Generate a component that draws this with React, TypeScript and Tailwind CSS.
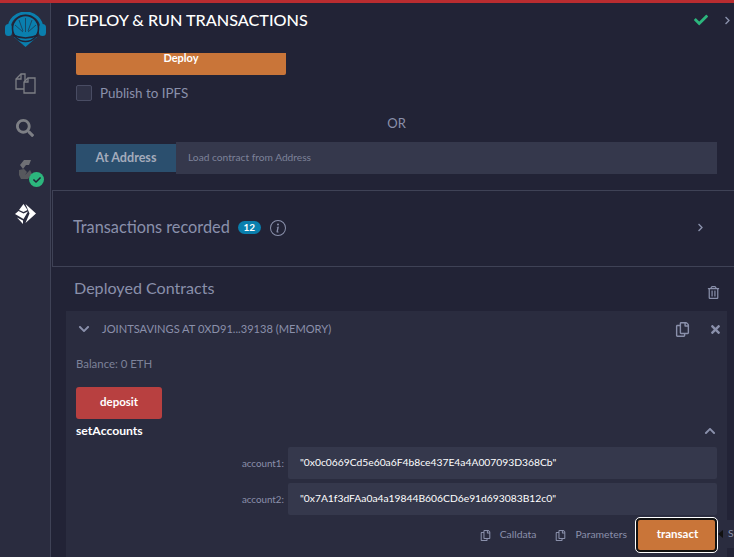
import { FaCheck, FaChevronDown, FaChevronRight, FaChevronUp, FaRegCopy, FaRegTrashAlt, FaSearch, FaTimes } from "react-icons/fa";
import { BsInfoCircle } from "react-icons/bs";

const font = { fontFamily: "Lato, 'Open Sans', sans-serif" };

function RemixLogo() {
  return (
    <svg width="41" height="35" viewBox="0 0 41 35">
      <rect x="0" y="12" width="7" height="12" rx="3.5" fill="#0a7fae" />
      <rect x="34" y="12" width="7" height="12" rx="3.5" fill="#0a7fae" />
      <path d="M4 17a16.5 16 0 0 1 33 0" fill="none" stroke="#0a7fae" strokeWidth="3" />
      <path d="M9 25h23l-11.5 10Z" fill="#0a7fae" />
      <circle cx="20.5" cy="16.5" r="13" fill="#0a7fae" stroke="#222336" strokeWidth="1.6" />
      <path d="M8 23q12.500 6 25 0" fill="none" stroke="#222336" strokeWidth="1.6" />
      <path d="M20.500 6v14M14 8l4 11M27 8l-4 11M10 13l8 7M31 13l-8 7" stroke="#222336" strokeWidth="0.6" />
    </svg>
  );
}

function EthLogo() {
  return (
    <svg width="21" height="20" viewBox="0 0 21 20">
      <path d="M8.500 0 12.500 6 8.500 8 4 6Z" fill="#fff" />
      <path d="M10.500 0 21 9.500 10.500 19 14.500 9.500Z" fill="#fff" />
      <path d="M0 10 3.500 7 8.500 9.500 13 7.500 8.500 15 6 13.500Z" fill="#fff" />
      <path d="M2 13.500 8 16.500V20Z" fill="#fff" />
    </svg>
  );
}

function Sidebar() {
  return (
    <div className="flex w-[51px] shrink-0 flex-col items-center border-r border-[#3f4256] bg-[#2a2c3f]">
      <div className="mt-[9px]">
        <RemixLogo />
      </div>
      <svg className="mt-[26px]" width="21" height="21" viewBox="0 0 21 21" fill="none" stroke="#7d7f85" strokeWidth="1.3">
        <path d="M1 16V6l5-5h4v15Z" />
        <path d="M9 20V9l4-4h7v15Z" fill="#2a2c3f" />
        <path d="M6 1v5H1M13 5v4H9" />
      </svg>
      <FaSearch className="mt-[25px] text-[#7d7f85]" size={18} />
      <div className="relative mt-[23px] h-[24px] w-[26px]">
        <svg className="ml-[6px]" width="15" height="20" viewBox="0 0 15 20">
          <path d="M6 0h7l-2 5H8L5 9 2 5Z" fill="#6f7075" />
          <path d="M1 10l5-1 3 3-2 3 5-5 2 4-4 5H3l-2-4Z" fill="#57585d" />
        </svg>
        <div className="absolute left-[17px] top-[12px] flex h-[15px] w-[15px] items-center justify-center rounded-full bg-[#2cb67d]">
          <FaCheck size={8} className="text-[#222336]" />
        </div>
      </div>
      <div className="mt-[20px]">
        <EthLogo />
      </div>
    </div>
  );
}

function ArgRow({ label, value }: { label: string; value: string }) {
  return (
    <div className="flex items-center">
      <span className="w-[212px] pr-[4px] text-right text-[9.8px] text-[#8a90ab]">{label}</span>
      <div className="flex h-[32px] w-[429px] items-center rounded-[2px] bg-[#35384c] pl-[12px] text-[10.3px] text-white">
        {value}
      </div>
    </div>
  );
}

function ContractCard() {
  return (
    <div className="ml-[15px] mr-[7px] mt-[13px] flex flex-1 flex-col bg-[#2a2c3f] px-[10px]">
      <div className="flex h-[36px] items-center">
        <FaChevronDown className="ml-[2px] text-[#8a90ab]" size={12} />
        <span className="ml-[12px] text-[11.1px] text-[#8a90ab]">JOINTSAVINGS AT 0XD91...39138 (MEMORY)</span>
        <FaRegCopy className="ml-auto mr-[19px] text-[#8a90ab]" size={15} />
        <FaTimes className="mr-[-5px] text-[#8a90ab]" size={13} />
      </div>
      <div className="mt-[9px] text-[11.4px] leading-[16px] text-[#7d8299]">Balance: 0 ETH</div>
      <button className="mt-[15px] h-[32px] w-[86px] rounded-[3px] bg-[#b84040] pb-[2px] text-[11.500px] font-bold text-white">
        deposit
      </button>
      <div className="mt-[4px] flex h-[16px] items-center justify-between">
        <span className="text-[12.2px] font-bold text-white">setAccounts</span>
        <FaChevronUp className="mr-[1px] text-[#8a90ab]" size={12} />
      </div>
      <div className="mt-[8px] flex flex-col gap-[4px]">
        <ArgRow label="account1:" value={'"0x0c0669Cd5e60a6F4b8ce437E4a4A007093D368Cb"'} />
        <ArgRow label="account2:" value={'"0x7A1f3dFAa0a4a19844B606CD6e91d693083B12c0"'} />
      </div>
      <div className="mt-[3px] flex items-center justify-end text-[10.4px] text-[#8a90ab]">
        <FaRegCopy size={11} />
        <span className="ml-[9px]">Calldata</span>
        <FaRegCopy className="ml-[19px]" size={11} />
        <span className="ml-[9px]">Parameters</span>
        <div className="relative ml-[9px]">
          <button className="h-[34px] w-[81px] rounded-[4px] border-2 border-[#111] bg-[#c97539] pb-[3px] pl-[2px] text-[11.500px] font-bold text-white outline outline-[1.5px] outline-white">
            transact
          </button>
          {/* tooltip that hangs off the button, clipped by the window */}
          <div className="absolute left-[82px] top-[2px] flex h-[28px] w-[40px] items-center bg-[#2a2c3f] pl-[10px] text-[10.4px] text-[#8a90ab]">
            <span className="absolute left-[0px] top-[10px] h-0 w-0 border-y-[4px] border-r-[5px] border-y-transparent border-r-[#111]" />
            S
          </div>
        </div>
      </div>
    </div>
  );
}

export default function App() {
  return (
    <div className="flex h-[557px] w-[734px] flex-col overflow-hidden bg-[#222336]" style={font}>
      <div className="h-[3px] shrink-0 bg-[#b92c30]" />
      <div className="flex min-h-0 flex-1">
        <Sidebar />
        <div className="flex min-w-0 flex-1 flex-col">
          {/* Header */}
          <div className="flex h-[34px] items-center pl-[16px] pr-[2px]">
            <h1 className="text-[16.2px] font-medium text-white">DEPLOY &amp; RUN TRANSACTIONS</h1>
            <FaCheck className="ml-auto text-[#2cb67d]" size={14} />
            <FaChevronRight className="ml-[15px] text-[#8a90ab]" size={9} />
          </div>

          <div className="ml-[25px] mr-[17px] mt-[16px]">
            <button className="flex h-[22px] w-[210px] justify-center rounded-b-[2px] bg-[#c97539] text-[11px] font-bold leading-[10px] text-white">
              Deploy
            </button>
            <div className="mt-[10px] flex h-[16px] items-center">
              <div className="h-[16px] w-[16px] rounded-[2px] border border-[#494c63] bg-[#2f3145]" />
              <span className="ml-[8px] text-[13.4px] leading-[16px] text-[#8a90ab]">Publish to IPFS</span>
            </div>
            <div className="mt-[14px] text-center text-[13px] leading-[16px] text-[#8a90ab]">OR</div>
            <div className="mt-[11px] flex items-center">
              <button className="h-[28px] w-[100px] bg-[#2b4f6e] text-[12.6px] font-bold text-[#a4abbb]">At Address</button>
              <div className="flex h-[32px] flex-1 items-center bg-[#35384c] pl-[12px] text-[10.2px] text-[#7d8299]">
                Load contract from Address
              </div>
            </div>
          </div>

          {/* Transactions recorded */}
          <div className="ml-[1px] mt-[16px] flex h-[77px] shrink-0 items-center border-y border-l border-[#3f4256] pb-[2px] pl-[20px] pr-[29px]">
            <span className="text-[16.3px] text-[#8a90ab]">Transactions recorded</span>
            <span className="ml-[8px] flex h-[13px] w-[23px] items-center justify-center rounded-full bg-[#0a7fae] text-[10px] font-bold text-white">
              12
            </span>
            <BsInfoCircle className="ml-[9px] text-[#8a90ab]" size={16} />
            <FaChevronRight className="ml-auto text-[#8a90ab]" size={9} />
          </div>

          {/* Deployed contracts */}
          <div className="flex min-h-0 flex-1 flex-col">
            <div className="mt-[11px] flex h-[20px] items-center pl-[23px] pr-[14px]">
              <span className="text-[16.1px] leading-[20px] text-[#8a90ab]">Deployed Contracts</span>
              <FaRegTrashAlt className="ml-auto mt-[8px] text-[#8a90ab]" size={13} />
            </div>
            <ContractCard />
          </div>
        </div>
      </div>
    </div>
  );
}
